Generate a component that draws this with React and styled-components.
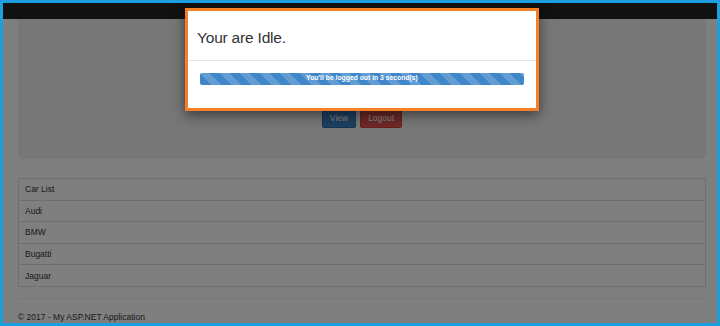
import React from 'react';
import styled, { createGlobalStyle } from 'styled-components';

const GlobalStyle = createGlobalStyle`
  html, body { margin: 0; padding: 0; background: #1b9fdf; }
  * { box-sizing: border-box; }
`;

const Frame = styled.div`
  position: relative;
  width: 720px;
  height: 326px;
  border: 3px solid #1b9fdf;
  background: #fff;
  overflow: hidden;
  font-family: "Liberation Sans", Arial, sans-serif;
  color: #333;
`;

const Navbar = styled.div`
  height: 16px;
  background: #222;
`;

const Container = styled.div`
  padding: 0 11px 0 15px;
`;

const Jumbotron = styled.div`
  height: 140px;
  background: #eee;
  border-radius: 0 0 6px 6px;
  display: flex;
  justify-content: center;
  align-items: flex-start;
  padding-top: 89px;
  gap: 4px;
`;

const Button = styled.button`
  height: 20px;
  padding: 0 7px;
  font-family: inherit;
  font-size: 8.5px;
  color: #fff;
  border-radius: 2px;
  border: 1px solid ${p => (p.$danger ? '#d43f3a' : '#2e6da4')};
  background: ${p => (p.$danger ? '#d9534f' : '#3a80bf')};
`;

const Table = styled.table`
  width: 100%;
  margin-top: 19px;
  border-collapse: collapse;
  font-size: 8.5px;
`;

const TD = styled.td`
  height: 21.6px;
  padding: 0 6px;
  border: 1px solid #ddd;
`;

const Rule = styled.hr`
  margin: 11px 0 0;
  border: 0;
  border-top: 1px solid #eee;
`;

const Footer = styled.footer`
  font-size: 8.5px;
  line-height: 12px;
  padding-top: 12px;
`;

const Backdrop = styled.div`
  position: absolute;
  inset: 0;
  background: rgba(0, 0, 0, 0.5);
`;

const Modal = styled.div`
  position: absolute;
  left: 182px;
  top: 5px;
  width: 354px;
  height: 103px;
  background: #fff;
  border: 3px solid #f58027;
  box-shadow: 0 4px 12px rgba(0, 0, 0, 0.5);
`;

const ModalHeader = styled.div`
  padding: 19px 9px 13px;
  border-bottom: 1px solid #e5e5e5;
`;

const Title = styled.h4`
  margin: 0;
  font-size: 15.5px;
  font-weight: normal;
  line-height: 16.5px;
  letter-spacing: -0.2px;
  color: #333;
`;

const ModalBody = styled.div`
  padding: 12px 12px 0;
`;

const Progress = styled.div`
  height: 12px;
  border-radius: 2px;
  overflow: hidden;
  background: #f5f5f5;
`;

const Bar = styled.div`
  height: 100%;
  background-color: #3f87c9;
  background-image: linear-gradient(
    45deg,
    rgba(255, 255, 255, 0.18) 25%,
    transparent 25%,
    transparent 50%,
    rgba(255, 255, 255, 0.18) 50%,
    rgba(255, 255, 255, 0.18) 75%,
    transparent 75%,
    transparent
  );
  background-size: 20px 20px;
  color: #fff;
  font-size: 6.8px;
  font-weight: bold;
  line-height: 9px;
  text-align: center;
`;

const cars = ['Car List', 'Audi', 'BMW', 'Bugatti', 'Jaguar'];

export default function App() {
  return (
    <Frame>
      <GlobalStyle />
      <Navbar />
      <Container>
        <Jumbotron>
          <Button>View</Button>
          <Button $danger>Logout</Button>
        </Jumbotron>
        <Table>
          <tbody>
            {cars.map((car, i) => (
              <tr key={`car-${i}`}>
                <TD>{car}</TD>
              </tr>
            ))}
          </tbody>
        </Table>
        <Rule />
        <Footer>© 2017 - My ASP.NET Application</Footer>
      </Container>
      <Backdrop />
      <Modal>
        <ModalHeader>
          <Title>Your are Idle.</Title>
        </ModalHeader>
        <ModalBody>
          <Progress>
            <Bar style={{ width: '100%' }}>You'll be logged out in 3 second(s)</Bar>
          </Progress>
        </ModalBody>
      </Modal>
    </Frame>
  );
}
